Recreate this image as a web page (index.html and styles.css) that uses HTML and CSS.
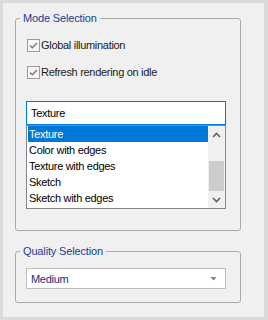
FILE: index.html
```html
<!DOCTYPE html>
<html lang="en">
<head>
  <meta charset="UTF-8" />
  <title>Render settings</title>
  <link rel="stylesheet" href="styles.css">
</head>
<body>
  <div class="window">
    <fieldset class="group mode">
      <legend>Mode Selection</legend>

      <label class="check">
        <svg class="box" width="13" height="13" viewBox="0 0 13 13">
          <rect x="0.5" y="0.5" width="12" height="12" fill="#f6f6f6" stroke="#9c9c9c" />
          <path d="M3 6.5 L5.3 8.8 L10 4" fill="none" stroke="#7a7a7a" stroke-width="1.4" />
        </svg>
        Global illumination
      </label>

      <label class="check">
        <svg class="box" width="13" height="13" viewBox="0 0 13 13">
          <rect x="0.5" y="0.5" width="12" height="12" fill="#f6f6f6" stroke="#9c9c9c" />
          <path d="M3 6.5 L5.3 8.8 L10 4" fill="none" stroke="#7a7a7a" stroke-width="1.4" />
        </svg>
        Refresh rendering on idle
      </label>

      <div class="edit">Texture</div>
      <div class="list">
        <ul class="items">
          <li class="selected">Texture</li>
          <li>Color with edges</li>
          <li>Texture with edges</li>
          <li>Sketch</li>
          <li>Sketch with edges</li>
        </ul>
        <div class="scrollbar">
          <div class="arrow">
            <svg width="9" height="6" viewBox="0 0 9 6"><path d="M1 5 L4.5 1.5 L8 5" fill="none" stroke="#606060" stroke-width="1.6" /></svg>
          </div>
          <div class="track"><div class="thumb"></div></div>
          <div class="arrow">
            <svg width="9" height="6" viewBox="0 0 9 6"><path d="M1 1 L4.5 4.5 L8 1" fill="none" stroke="#606060" stroke-width="1.6" /></svg>
          </div>
        </div>
      </div>
    </fieldset>

    <fieldset class="group quality">
      <legend>Quality Selection</legend>
      <div class="combo">
        <span>Medium</span>
        <svg width="7" height="4" viewBox="0 0 7 4"><path d="M0.5 0 L6.5 0 L3.5 3.5 Z" fill="#808080" /></svg>
      </div>
    </fieldset>
  </div>
</body>
</html>
```
FILE: styles.css
```css
body {
  margin: 0;
  font-family: "Liberation Sans", Arial, sans-serif;
  font-size: 11px;
  letter-spacing: -0.3px;
  color: #1a1a1a;
}
.window {
  box-sizing: border-box;
  width: 268px;
  height: 320px;
  background-color: #f0f0f0;
  border: 3px solid #dadada;
  border-right-width: 4px;
  padding: 8px 0 0 12px;
}
.group {
  box-sizing: border-box;
  width: 226px;
  margin: 0;
  padding: 0 0 0 10px;
  border: 1px solid #a9a9a9;
  border-radius: 3px;
}
.group legend {
  margin-left: -6px;
  padding: 0 3px;
  line-height: 14px;
  letter-spacing: -0.15px;
  color: #1d3b91;
}
.mode {
  padding-bottom: 21px;
}
.quality {
  margin-top: 13px;
  padding-bottom: 13px;
}
.check {
  display: flex;
  align-items: center;
  gap: 1px;
  height: 14px;
  margin: 13px 0 0 1px;
}
.edit {
  box-sizing: border-box;
  width: 200px;
  height: 24px;
  margin-top: 22px;
  padding-left: 4px;
  border: 1px solid #0078d7;
  background: #fff;
  line-height: 22px;
  color: #000;
}
.list {
  box-sizing: border-box;
  display: flex;
  width: 200px;
  height: 84px;
  border: 1px solid #828790;
  background: #fff;
}
.items {
  flex: 1;
  list-style: none;
  margin: 0;
  padding: 0 0 0 1px;
}
.items li {
  height: 16px;
  line-height: 16px;
  padding-left: 1px;
  color: #000;
}
.items li.selected {
  background: #0078d7;
  color: #fff;
}
.scrollbar {
  display: flex;
  flex-direction: column;
  width: 17px;
  background: #f0f0f0;
}
.arrow {
  display: flex;
  align-items: center;
  justify-content: center;
  height: 17px;
}
.track {
  flex: 1;
  padding-top: 18px;
}
.thumb {
  height: 30px;
  margin: 0 1px;
  background: #cdcdcd;
}
.combo {
  box-sizing: border-box;
  display: flex;
  align-items: center;
  justify-content: space-between;
  width: 200px;
  height: 21px;
  margin-top: 10px;
  padding: 0 8px 0 4px;
  border: 1px solid #bdbdbd;
  background: #fff;
  color: #1e2a78;
}
```
